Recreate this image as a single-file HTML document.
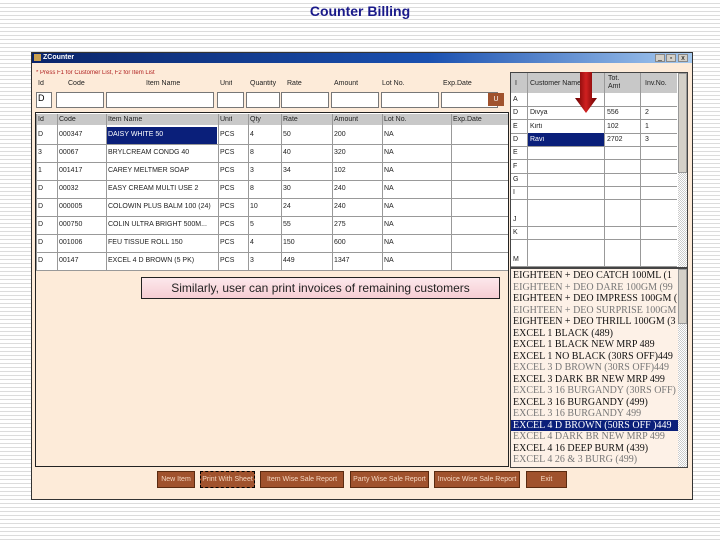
<!DOCTYPE html>
<html><head><meta charset="utf-8"><style>
*{margin:0;padding:0;box-sizing:border-box}
body{width:720px;height:540px;overflow:hidden;position:relative;font-family:"Liberation Sans",sans-serif;
background:repeating-linear-gradient(180deg,#fff 0 3px,#dcdcdc 3px 4px);}
.a{position:absolute}
.t{font-size:7px;color:#222;white-space:nowrap;overflow:hidden}
.serif{font-family:"Liberation Serif",serif}
.btn{position:absolute;top:471px;height:17px;background:#a0522d;border:1px solid #5a2a10;color:#f5d6c0;font-size:7px;text-align:center;line-height:15px;white-space:nowrap;overflow:hidden}
</style></head><body>
<div class="a" style="left:0;top:3px;width:720px;text-align:center;font-size:14px;font-weight:bold;color:#1a1a8a">Counter Billing</div>

<!-- window -->
<div class="a" style="left:31px;top:52px;width:662px;height:448px;background:#fdebd9;border:1px solid #333"></div>
<div class="a" style="left:32px;top:53px;width:660px;height:10px;background:linear-gradient(90deg,#0a246a,#1a50b0 60%,#a6caf0)"></div>
<div class="a" style="left:34px;top:54px;width:7px;height:7px;background:#c9a050"></div>
<div class="a t" style="left:43px;top:53px;color:#fff;font-weight:bold;font-size:7px;line-height:9px">ZCounter</div>
<div class="a" style="left:655px;top:54px;width:10px;height:8px;background:#d4d0c8;border:1px solid #888;font-size:7px;line-height:6px;text-align:center">_</div>
<div class="a" style="left:666px;top:54px;width:10px;height:8px;background:#d4d0c8;border:1px solid #888;font-size:7px;line-height:7px;text-align:center">▫</div>
<div class="a" style="left:678px;top:54px;width:10px;height:8px;background:#d4d0c8;border:1px solid #888;font-size:7px;line-height:7px;text-align:center">x</div>

<div class="a t" style="left:36px;top:70px;color:#b02020;font-size:6px">* Press F1 for Customer List, F2 for Item List</div>
<div class="a t" style="left:38px;top:80px">Id</div>
<div class="a t" style="left:68px;top:80px">Code</div>
<div class="a t" style="left:146px;top:80px">Item Name</div>
<div class="a t" style="left:220px;top:80px">Unit</div>
<div class="a t" style="left:250px;top:80px">Quantity</div>
<div class="a t" style="left:287px;top:80px">Rate</div>
<div class="a t" style="left:334px;top:80px">Amount</div>
<div class="a t" style="left:382px;top:80px">Lot No.</div>
<div class="a t" style="left:443px;top:80px">Exp.Date</div>

<div class="a" style="left:36px;top:92px;width:16px;height:16px;background:#fff;border:1px solid #777;font-size:9px;padding-left:1px">D</div>
<div class="a" style="left:56px;top:92px;width:48px;height:16px;background:#fff;border:1px solid #777"></div>
<div class="a" style="left:106px;top:92px;width:108px;height:16px;background:#fff;border:1px solid #777"></div>
<div class="a" style="left:217px;top:92px;width:27px;height:16px;background:#fff;border:1px solid #777"></div>
<div class="a" style="left:246px;top:92px;width:34px;height:16px;background:#fff;border:1px solid #777"></div>
<div class="a" style="left:281px;top:92px;width:48px;height:16px;background:#fff;border:1px solid #777"></div>
<div class="a" style="left:331px;top:92px;width:48px;height:16px;background:#fff;border:1px solid #777"></div>
<div class="a" style="left:381px;top:92px;width:58px;height:16px;background:#fff;border:1px solid #777"></div>
<div class="a" style="left:441px;top:92px;width:57px;height:16px;background:#fff;border:1px solid #777"></div>
<div class="a" style="left:488px;top:93px;width:16px;height:13px;background:#a0522d;color:#fff;font-size:7px;text-align:center;line-height:13px">U</div>

<!-- left grid -->
<div class="a" style="left:35px;top:112px;width:474px;height:355px;border:1px solid #222"></div>
<div class="a" style="left:36px;top:113px;width:472px;height:158px;background:#fff"></div>
<div class="a" style="left:36px;top:114px;width:472px;height:11px;background:#c8c8c8"></div>
<div id="grid"></div>
<div class="a" style="left:141px;top:277px;width:359px;height:22px;border:1px solid #222;background:linear-gradient(180deg,#fce8ec,#f6cdd3);font-size:12px;line-height:20px;text-align:center;color:#222">Similarly, user can print invoices of remaining customers</div>

<!-- right customer grid -->
<div class="a" style="left:510px;top:72px;width:178px;height:196px;background:#fff;border:1px solid #444"></div>
<div class="a" style="left:511px;top:73px;width:166px;height:20px;background:#c8c8c8"></div>
<div class="a" style="left:678px;top:73px;width:9px;height:194px;background:repeating-conic-gradient(#ccc 0 25%,#fff 0 50%) 0 0/2px 2px"></div>
<div class="a" style="left:678px;top:73px;width:9px;height:100px;background:#d4d0c8;border:1px solid #999"></div>
<div id="cust"></div>

<!-- item list -->
<div class="a" style="left:510px;top:268px;width:178px;height:200px;background:#fdf1e7;border:1px solid #444"></div>
<div class="a" style="left:678px;top:269px;width:9px;height:198px;background:repeating-conic-gradient(#ccc 0 25%,#fff 0 50%) 0 0/2px 2px"></div>
<div class="a" style="left:678px;top:269px;width:9px;height:55px;background:#d4d0c8;border:1px solid #999"></div>
<div id="list"></div>

<!-- arrow -->
<svg class="a" style="left:574px;top:70px" width="24" height="44"><defs><linearGradient id="g" x1="0" x2="1"><stop offset="0" stop-color="#600"/><stop offset=".5" stop-color="#d02020"/><stop offset="1" stop-color="#600"/></linearGradient></defs><path d="M6 2H18V28H23L12 43L1 28H6Z" fill="url(#g)"/></svg>

<div class="btn" style="left:157px;width:38px">New Item</div>
<div class="btn" style="left:200px;width:55px;border:1px dashed #000">Print With Sheet</div>
<div class="btn" style="left:260px;width:84px">Item Wise Sale Report</div>
<div class="btn" style="left:350px;width:79px">Party Wise Sale Report</div>
<div class="btn" style="left:434px;width:86px">Invoice Wise Sale Report</div>
<div class="btn" style="left:526px;width:41px">Exit</div>

<script>
var g=document.getElementById('grid'),h='';
var cols=[[36,'Id'],[57,'Code'],[106,'Item Name'],[218,'Unit'],[248,'Qty'],[281,'Rate'],[332,'Amount'],[382,'Lot No.'],[451,'Exp.Date']];
cols.forEach(function(c){h+='<div class="a t" style="left:'+(c[0]+2)+'px;top:116px">'+c[1]+'</div>';h+='<div class="a" style="left:'+c[0]+'px;top:114px;width:1px;height:157px;background:#999"></div>';});
var rows=[['D','000347','DAISY WHITE 50','PCS','4','50','200','NA'],['3','00067','BRYLCREAM CONDG 40','PCS','8','40','320','NA'],['1','001417','CAREY MELTMER SOAP','PCS','3','34','102','NA'],['D','00032','EASY CREAM MULTI USE 2','PCS','8','30','240','NA'],['D','000005','COLOWIN PLUS BALM 100 (24)','PCS','10','24','240','NA'],['D','000750','COLIN ULTRA BRIGHT 500M...','PCS','5','55','275','NA'],['D','001006','FEU TISSUE ROLL 150','PCS','4','150','600','NA'],['D','00147','EXCEL 4 D BROWN (5 PK)','PCS','3','449','1347','NA']];
rows.forEach(function(r,i){var y=127+i*18;
 if(i==0)h+='<div class="a" style="left:107px;top:'+y+'px;width:110px;height:17px;background:#0a1f7a"></div>';
 h+='<div class="a" style="left:36px;top:'+(y+17)+'px;width:472px;height:1px;background:#999"></div>';
 var xs=[38,59,108,220,250,283,334,384];
 r.forEach(function(v,j){h+='<div class="a t" style="left:'+xs[j]+'px;top:'+(y+4)+'px;'+(i==0&&j==2?'color:#fff;':'')+'width:'+(j==2?108:60)+'px">'+v+'</div>';});
});
g.innerHTML=h;
var c=document.getElementById('cust');h='';
h+='<div class="a t" style="left:515px;top:80px">I</div><div class="a t" style="left:530px;top:80px">Customer Name</div><div class="a t" style="left:608px;top:75px;line-height:8px">Tot.<br>Amt</div><div class="a t" style="left:645px;top:80px">Inv.No.</div>';
[527,604,640].forEach(function(x){h+='<div class="a" style="left:'+x+'px;top:73px;width:1px;height:194px;background:#999"></div>';});
var cr=[['A','','',''],['D','Divya','556','2'],['E','Kirti','102','1'],['D','Ravi','2702','3'],['E','','',''],['F','','',''],['G','','',''],['I','','',''],['J','','',''],['K','','',''],['M','','','']];
var ys=[93,106,120,133,146,160,173,186,213,226,253];
cr.forEach(function(r,i){var y=ys[i];
 if(i==3)h+='<div class="a" style="left:528px;top:'+y+'px;width:76px;height:13px;background:#0a1f7a"></div>';
 h+='<div class="a" style="left:511px;top:'+(y+13)+'px;width:166px;height:1px;background:#999"></div>';
 h+='<div class="a t" style="left:513px;top:'+(y+3)+'px">'+r[0]+'</div><div class="a t" style="left:530px;top:'+(y+3)+'px;'+(i==3?'color:#fff':'')+'">'+r[1]+'</div><div class="a t" style="left:607px;top:'+(y+3)+'px">'+r[2]+'</div><div class="a t" style="left:645px;top:'+(y+3)+'px">'+r[3]+'</div>';
});
c.innerHTML=h;
var L=['EIGHTEEN + DEO CATCH 100ML (1','EIGHTEEN + DEO DARE 100GM (99','EIGHTEEN + DEO IMPRESS 100GM (','EIGHTEEN + DEO SURPRISE 100GM','EIGHTEEN + DEO THRILL 100GM (3','EXCEL 1 BLACK (489)','EXCEL 1 BLACK NEW MRP 489','EXCEL 1 NO BLACK (30RS OFF)449','EXCEL 3 D BROWN (30RS OFF)449','EXCEL 3 DARK BR NEW MRP 499','EXCEL 3 16 BURGANDY (30RS OFF)','EXCEL 3 16 BURGANDY (499)','EXCEL 3 16 BURGANDY 499','EXCEL 4 D BROWN (50RS OFF )449','EXCEL 4 DARK BR NEW MRP 499','EXCEL 4 16 DEEP BURM (439)','EXCEL 4 26 & 3 BURG (499)'];
var l=document.getElementById('list');h='';
L.forEach(function(v,i){var y=270+i*11.5;
 h+='<div class="a t serif" style="left:511px;top:'+y+'px;width:167px;height:11px;font-size:10px;line-height:11px;padding-left:2px;'+(i==13?'background:#0a1f7a;color:#fff;':'color:'+(i%2&&i<5||i==3||i==8||i==10||i==12||i==14||i==16?'#777':'#111'))+'">'+v+'</div>';});
l.innerHTML=h;
</script>
</body></html>
